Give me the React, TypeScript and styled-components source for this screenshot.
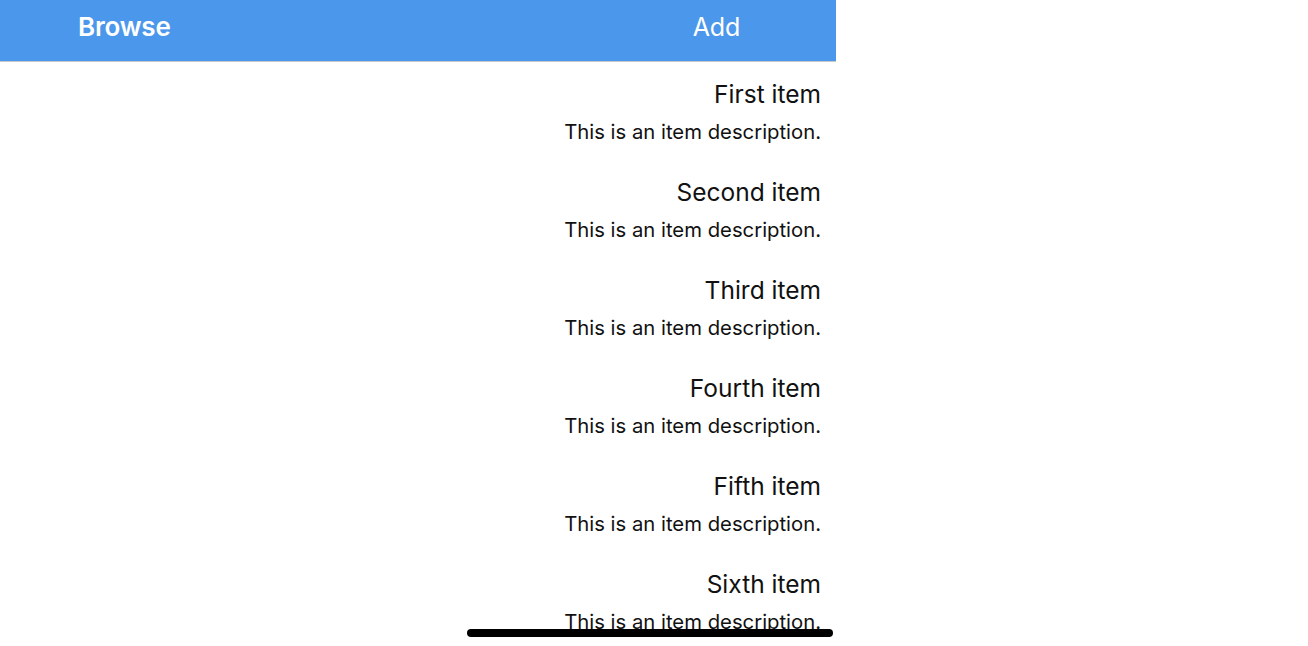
import React from 'react';
import styled, { createGlobalStyle } from 'styled-components';

const GlobalStyle = createGlobalStyle`
  html, body {
    margin: 0;
    padding: 0;
    background: #fff;
    font-family: Inter, "Noto Sans", sans-serif;
    overflow: hidden;
  }
`;

const SCScreen = styled.div`
  position: relative;
  width: 836px;
  height: 646px;
  overflow: hidden;
  background: #fff;
`;

const SCNavBar = styled.div`
  display: flex;
  align-items: center;
  justify-content: space-between;
  height: 62px;
  padding: 0 96px 8px 78px;
  background: #4b97eb;
  border-bottom: 1px solid #c9c9c9;
  box-sizing: border-box;
`;

const SCNavButton = styled.span<{ $bold?: boolean }>`
  color: #fff;
  font-size: ${(p) => (p.$bold ? 26 : 25)}px;
  font-weight: ${(p) => (p.$bold ? 600 : 400)};
  letter-spacing: -0.2px;
`;

const SCList = styled.div`
  display: flex;
  flex-direction: column;
  align-items: flex-end;
  padding: 16px 15px 0 0;
`;

const SCItem = styled.div`
  display: flex;
  flex-direction: column;
  align-items: flex-end;
  height: 98px;
`;

const SCTitle = styled.div`
  font-size: 24.5px;
  color: #111;
  line-height: 32px;
`;

const SCDesc = styled.div`
  font-size: 20.3px;
  color: #111;
  line-height: 26px;
  margin-top: 9px;
`;

const SCHomeIndicator = styled.div`
  position: absolute;
  left: 467px;
  width: 366px;
  top: 629px;
  height: 8px;
  border-radius: 4px;
  background: #000;
`;

const items = ['First item', 'Second item', 'Third item', 'Fourth item', 'Fifth item', 'Sixth item'];

export default function App() {
  return (
    <SCScreen>
      <GlobalStyle />
      <SCNavBar>
        <SCNavButton $bold>Browse</SCNavButton>
        <SCNavButton>Add</SCNavButton>
      </SCNavBar>
      <SCList>
        {items.map((title) => (
          <SCItem key={title}>
            <SCTitle>{title}</SCTitle>
            <SCDesc>This is an item description.</SCDesc>
          </SCItem>
        ))}
      </SCList>
      <SCHomeIndicator />
    </SCScreen>
  );
}
